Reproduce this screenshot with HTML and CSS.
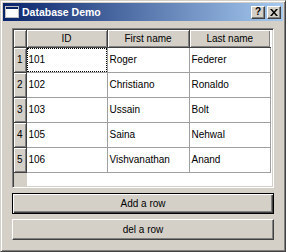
FILE: index.html
```html
<!DOCTYPE html>
<html lang="en">
<head>
  <meta charset="UTF-8" />
  <title>Database Demo</title>
  <link rel="stylesheet" href="styles.css">
</head>
<body>
  <div class="window">
    <div class="titlebar">
      <svg class="app-icon" width="14" height="12" viewBox="0 0 14 12">
        <rect x="0.5" y="0.5" width="13" height="11" fill="#fff" stroke="#c0c0c0"/>
        <rect x="1" y="1" width="12" height="2" fill="#0a246a"/>
      </svg>
      <span class="title">Database Demo</span>
      <div class="caption-buttons">
        <div class="cap-btn">?</div>
        <div class="cap-btn">
          <svg width="8" height="7" viewBox="0 0 8 7">
            <path d="M0 0h2l2 2.5 2-2.5h2l-3 3.5 3 3.5h-2l-2-2.5-2 2.5h-2l3-3.5z" fill="#000"/>
          </svg>
        </div>
      </div>
    </div>

    <div class="content">
      <div class="table-frame">
        <table class="grid">
          <thead>
            <tr>
              <th class="corner"></th>
              <th class="col-id">ID</th>
              <th class="col-first">First name</th>
              <th class="col-last">Last name</th>
            </tr>
          </thead>
          <tbody>
            <tr><th>1</th><td class="focus"><span>101</span></td><td>Roger</td><td>Federer</td></tr>
            <tr><th>2</th><td>102</td><td>Christiano</td><td>Ronaldo</td></tr>
            <tr><th>3</th><td>103</td><td>Ussain</td><td>Bolt</td></tr>
            <tr><th>4</th><td>105</td><td>Saina</td><td>Nehwal</td></tr>
            <tr><th>5</th><td>106</td><td>Vishvanathan</td><td>Anand</td></tr>
          </tbody>
        </table>
        <div class="filler">
          <div class="filler-head"></div>
          <div class="filler-body"></div>
        </div>
      </div>

      <button class="push default">Add a row</button>
      <button class="push">del a row</button>
    </div>
  </div>
</body>
</html>
```

FILE: styles.css
```css
body {
  margin: 0;
  background-color: #d4d0c8;
  font-family: 'Liberation Sans', Arial, sans-serif;
  font-size: 10px;
  color: #000;
}

.window {
  width: 286px;
  height: 252px;
  box-sizing: border-box;
  border: 1px solid;
  border-color: #d4d0c8 #404040 #404040 #d4d0c8;
  box-shadow: inset 1px 1px #fff, inset -1px -1px #808080;
  padding: 2px;
  display: flex;
  flex-direction: column;
}

.titlebar {
  height: 18px;
  background: linear-gradient(90deg, #0a246a, #a6caf0);
  display: flex;
  align-items: center;
  padding: 0 2px 0 2px;
}

.app-icon {
  margin-right: 3px;
}

.title {
  color: #fff;
  font-weight: bold;
  font-size: 10.5px;
  flex-grow: 1;
}

.caption-buttons {
  display: flex;
  gap: 2px;
}

.cap-btn {
  width: 12px;
  height: 11px;
  background: #d4d0c8;
  border: 1px solid;
  border-color: #fff #404040 #404040 #fff;
  box-shadow: inset -1px -1px #808080;
  display: flex;
  align-items: center;
  justify-content: center;
  font-weight: bold;
  font-size: 10px;
  line-height: 1;
}

.content {
  flex-grow: 1;
  padding: 7px 9px 0 9px;
  display: flex;
  flex-direction: column;
}

.table-frame {
  height: 160px;
  box-sizing: border-box;
  border: 1px solid;
  border-color: #808080 #fff #fff #808080;
  box-shadow: inset 1px 1px #404040, inset -1px -1px #d4d0c8;
  padding: 1px;
  display: flex;
  flex-direction: column;
  background: #fff;
}

.grid {
  border-collapse: collapse;
  table-layout: fixed;
  width: 256px;
}

.grid th {
  background: #d4d0c8;
  font-weight: normal;
  padding: 0;
  box-shadow: inset 1px 1px #fff, inset -1px -1px #808080;
}

.grid thead th {
  height: 17px;
  text-align: center;
  border-right: 1px solid #404040;
  border-bottom: 1px solid #404040;
  box-sizing: border-box;
}

.grid .corner { width: 12px; }
.grid .col-id { width: 81px; }
.grid .col-first { width: 82px; }
.grid .col-last { width: 81px; border-right: none; }

.grid tbody th {
  text-align: center;
  border-bottom: 1px solid #404040;
  border-right: 1px solid #404040;
}

.grid td {
  height: 24px;
  padding: 0 0 0 2px;
  border-right: 1px solid #a0a0a0;
  border-bottom: 1px solid #a0a0a0;
  white-space: nowrap;
  overflow: hidden;
}

.grid td.focus {
  padding: 0;
}

.grid td.focus span {
  display: block;
  height: 22px;
  line-height: 22px;
  padding-left: 1px;
  border: 1px dotted #000;
}

.filler {
  flex-grow: 1;
  display: flex;
}

.filler-head {
  width: 12px;
  background: #d4d0c8;
  border-right: 1px solid #d4d0c8;
}

.filler-body {
  flex-grow: 1;
  background: #fff;
}

.push {
  height: 21px;
  margin-top: 5px;
  font-family: inherit;
  font-size: 10px;
  color: #000;
  background: #d4d0c8;
  border: 1px solid;
  border-color: #fff #404040 #404040 #fff;
  box-shadow: inset -1px -1px #808080;
  padding: 0;
}

.push.default {
  border: 1px solid #000;
  box-shadow: inset 1px 1px #fff, inset -1px -1px #404040, inset -2px -2px #808080;
}
```
